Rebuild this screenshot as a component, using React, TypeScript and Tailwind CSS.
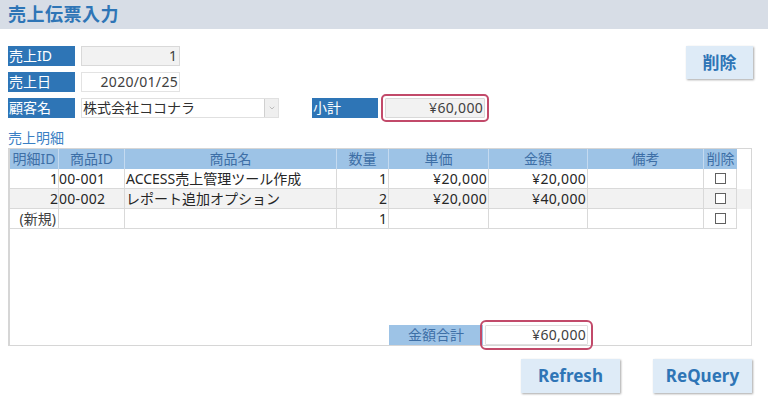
import { ChevronDown } from "lucide-react";

const font = { fontFamily: '"Noto Sans", "Noto Sans CJK JP", sans-serif' };

interface Line {
  id: string;
  code: string;
  name: string;
  qty: string;
  price: string;
  amount: string;
}

const lines: Line[] = [
  { id: "1", code: "00-001", name: "ACCESS売上管理ツール作成", qty: "1", price: "¥20,000", amount: "¥20,000" },
  { id: "2", code: "00-002", name: "レポート追加オプション", qty: "2", price: "¥20,000", amount: "¥40,000" },
  { id: "(新規)", code: "", name: "", qty: "1", price: "", amount: "" },
];

const cols = ["w-[49px]", "w-[66px]", "w-[212px]", "w-[52px]", "w-[100px]", "w-[99px]", "w-[116px]", "w-[33px]"];

function Label({ children, w = "w-[67px]" }: { children: React.ReactNode; w?: string }) {
  return (
    <div className={`${w} h-[20px] bg-[#2e75b6] text-white text-[14px] leading-[20px] pl-[1px]`}>
      {children}
    </div>
  );
}

function Checkbox() {
  return <div className="mx-auto h-[11px] w-[11px] border border-[#606060] bg-white" />;
}

export default function App() {
  return (
    <div className="h-[405px] w-[768px] bg-white text-[#262626]" style={font}>
      {/* Title bar */}
      <div className="flex h-[29px] items-center bg-[#d7dde6] px-[8px]">
        <h1 className="text-[18px] font-bold text-[#2e75b6] tracking-[0.5px]">売上伝票入力</h1>
      </div>

      {/* Header form */}
      <div className="flex justify-between pl-[8px] pr-[15px] pt-[17px]">
        <div className="flex flex-col gap-[6px]">
          <div className="flex items-center gap-[6px]">
            <Label>売上ID</Label>
            <div className="h-[20px] w-[99px] border border-[#d9d9d9] bg-[#f2f2f2] pr-[2px] text-right text-[14px] leading-[18px] text-[#404040]">
              1
            </div>
          </div>
          <div className="flex items-center gap-[6px]">
            <Label>売上日</Label>
            <div className="h-[20px] w-[99px] border border-[#e3e3e3] bg-white pr-[1px] text-right text-[14px] leading-[18px] text-[#404040] tracking-[0.3px]">
              2020/01/25
            </div>
          </div>
          <div className="flex items-center">
            <Label>顧客名</Label>
            <div className="ml-[6px] flex h-[20px] w-[198px] border border-[#e0e0e0] bg-white">
              <div className="flex-1 pl-[1px] text-[14px] leading-[18px] text-[#303030]">株式会社ココナラ</div>
              <div className="flex w-[14px] items-center justify-center border-l border-[#d0d0d0] bg-[#efefef]">
                <ChevronDown size={8} strokeWidth={1.5} className="text-[#888]" />
              </div>
            </div>
            <div className="ml-[33px]">
              <Label w="w-[66px]">小計</Label>
            </div>
            <div className="ml-[7px] h-[20px] w-[100px] rounded-[1px] border border-[#d9d9d9] bg-[#f2f2f2] pr-[1px] text-right text-[14px] leading-[18px] text-[#404040] tracking-[0.3px] outline-2 outline-offset-[2px] outline-[#c24a6a]">
              ¥60,000
            </div>
          </div>
        </div>
        <button className="h-[33px] w-[67px] bg-[#deebf7] text-[17px] font-bold text-[#2e75b6] shadow-[1px_1px_2px_rgba(0,0,0,0.35)]">
          削除
        </button>
      </div>

      {/* Detail section */}
      <div className="px-[8px] pt-[12px]">
        <div className="h-[18px] text-[14px] leading-[16px] text-[#3a7fc4]">売上明細</div>
        <div className="flex h-[198px] w-[744px] flex-col border border-l-2 border-[#d6d6d6]">
          {/* table header */}
          <div className="flex h-[20px] shrink-0">
            {["明細ID", "商品ID", "商品名", "数量", "単価", "金額", "備考", "削除"].map((h, i) => (
              <div
                key={h}
                className={`${cols[i]} overflow-hidden whitespace-nowrap border-r border-[#c4daf0] bg-[#9dc3e6] text-center text-[14px] leading-[20px] text-[#3d6fa6] last:border-r-0`}
              >
                {h}
              </div>
            ))}
          </div>
          {/* rows */}
          {lines.map((l, r) => {
            const bg = r === 1 ? "bg-[#f2f2f2]" : "bg-white";
            return (
              <div key={r} className={`flex h-[20px] shrink-0 ${bg}`}>
                <div className="flex border-b border-[#d9d9d9] text-[14px] leading-[19px]">
                  <div className={`${cols[0]} border-r border-[#d9d9d9] text-right ${r === 2 ? "pr-[2px] text-[#404040]" : "pr-0"}`}>{l.id}</div>
                  <div className={`${cols[1]} border-r border-[#d9d9d9] tracking-[0.3px]`}>{l.code}</div>
                  <div className={`${cols[2]} border-r border-[#d9d9d9] pl-[1px]`}>{l.name}</div>
                  <div className={`${cols[3]} border-r border-[#d9d9d9] pr-[1px] text-right`}>{l.qty}</div>
                  <div className={`${cols[4]} border-r border-[#d9d9d9] pr-[1px] text-right tracking-[0.3px]`}>{l.price}</div>
                  <div className={`${cols[5]} border-r border-[#d9d9d9] pr-[1px] text-right tracking-[0.3px]`}>{l.amount}</div>
                  <div className={`${cols[6]} border-r border-[#d9d9d9]`} />
                  <div className={`${cols[7]} flex items-center border-r border-[#d9d9d9]`}>
                    <Checkbox />
                  </div>
                </div>
                <div className="flex-1" />
              </div>
            );
          })}
          <div className="flex-1" />
          {/* total */}
          <div className="flex h-[20px] shrink-0 pl-[379px]">
            <div className="w-[94px] bg-[#9dc3e6] text-center text-[14px] leading-[20px] text-[#3d6fa6]">金額合計</div>
            <div className="ml-[2px] w-[103px] rounded-[1px] border border-[#e0e0e0] bg-white pr-[1px] text-right text-[14px] leading-[18px] text-[#404040] tracking-[0.3px] outline-2 outline-offset-[3px] outline-[#c24a6a]">
              ¥60,000
            </div>
          </div>
        </div>
      </div>

      {/* Buttons */}
      <div className="flex justify-end gap-[33px] pr-[16px] pt-[13px]">
        <button className="h-[34px] w-[99px] bg-[#deebf7] text-[17px] font-bold text-[#2e75b6] shadow-[1px_1px_2px_rgba(0,0,0,0.35)]">
          Refresh
        </button>
        <button className="h-[34px] w-[99px] bg-[#deebf7] text-[17px] font-bold text-[#2e75b6] shadow-[1px_1px_2px_rgba(0,0,0,0.35)]">
          ReQuery
        </button>
      </div>
    </div>
  );
}
